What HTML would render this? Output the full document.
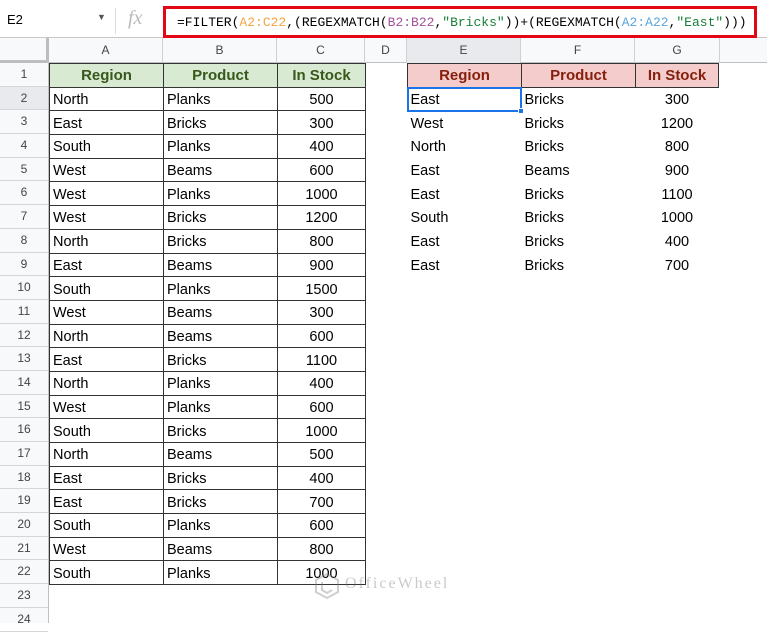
<!DOCTYPE html>
<html><head><meta charset="utf-8"><style>
*{box-sizing:border-box;margin:0;padding:0}
body{width:767px;height:623px;overflow:hidden;background:#fff;font-family:"Liberation Sans",Arial,sans-serif;font-size:14px;color:#000;position:relative}
.abs{position:absolute}
#top{left:0;top:0;width:767px;height:38px;background:#fff;border-bottom:1px solid #c7c7c7}
#namebox{left:0;top:8px;width:116px;height:26px;font-size:13px;padding:4px 7px;border-right:1px solid #dadce0}
#fx{left:128px;top:7px;font-family:"Liberation Serif",serif;font-style:italic;font-size:20px;color:#bbb}
#formula{left:163px;top:6px;width:594px;height:32px;border:3px solid #e30613;font-family:"Liberation Mono",monospace;font-size:13px;padding:6px 0 0 11px;white-space:nowrap;overflow:hidden}
#colhdr{left:0;top:38px;width:767px;height:25px;background:#f8f9fa;border-bottom:1px solid #c0c0c0}
.ch{position:absolute;top:0;height:25px;line-height:25px;text-align:center;font-size:12px;color:#444;border-right:1px solid #d0d0d0}
#rowhdr{left:0;top:63px;width:49px;height:560px;background:#f8f9fa;border-right:1px solid #c0c0c0}
.rh{height:23.7px;line-height:23.7px;text-align:center;font-size:12px;color:#444;border-bottom:1px solid #d6d6d6}
table{border-collapse:collapse;position:absolute;table-layout:fixed}
td{height:23.7px;padding:2px 3px 0;white-space:nowrap;overflow:hidden;font-size:14.5px;line-height:20px}
#L td{border:1px solid #333}
#L tr:first-child td{background:#d9ead3;color:#38571a;font-weight:bold;text-align:center;font-size:15px}
.n{text-align:center}
#R tr:first-child td{background:#f4cccc;color:#85200c;font-weight:bold;text-align:center;font-size:15px;border:1px solid #333}
#R td{border:none}
</style></head><body>
<div id="top" class="abs"></div>
<div id="namebox" class="abs">E2<span style="position:absolute;left:97px;top:4px;font-size:9px;color:#555">▼</span></div>
<div id="fx" class="abs">fx</div>
<div id="formula" class="abs">=FILTER(<span style="color:#f4a340">A2:C22</span>,(REGEXMATCH(<span style="color:#a5529c">B2:B22</span>,<span style="color:#188038">"Bricks"</span>))+(REGEXMATCH(<span style="color:#5aa5dc">A2:A22</span>,<span style="color:#188038">"East"</span>)))</div>
<div id="colhdr" class="abs">
<div class="ch" style="left:0;width:49px;border-right:3px solid #bdbdbd;border-bottom:3px solid #bdbdbd;height:25px"></div>
<div class="ch" style="left:49px;width:114px">A</div>
<div class="ch" style="left:163px;width:114px">B</div>
<div class="ch" style="left:277px;width:88px">C</div>
<div class="ch" style="left:365px;width:42px">D</div>
<div class="ch" style="left:407px;width:114px;background:#e8eaed">E</div>
<div class="ch" style="left:521px;width:114px">F</div>
<div class="ch" style="left:635px;width:85px">G</div>
</div>
<div id="rowhdr" class="abs">
<div class="rh">1</div><div class="rh" style="background:#e8eaed">2</div><div class="rh">3</div><div class="rh">4</div><div class="rh">5</div><div class="rh">6</div><div class="rh">7</div><div class="rh">8</div><div class="rh">9</div><div class="rh">10</div><div class="rh">11</div><div class="rh">12</div><div class="rh">13</div><div class="rh">14</div><div class="rh">15</div><div class="rh">16</div><div class="rh">17</div><div class="rh">18</div><div class="rh">19</div><div class="rh">20</div><div class="rh">21</div><div class="rh">22</div><div class="rh">23</div><div class="rh">24</div>
</div>
<table id="L" style="left:49px;top:63px;width:316px">
<colgroup><col style="width:114px"><col style="width:114px"><col style="width:88px"></colgroup>
<tr><td>Region</td><td>Product</td><td>In Stock</td></tr>
<tr><td>North</td><td>Planks</td><td class="n">500</td></tr>
<tr><td>East</td><td>Bricks</td><td class="n">300</td></tr>
<tr><td>South</td><td>Planks</td><td class="n">400</td></tr>
<tr><td>West</td><td>Beams</td><td class="n">600</td></tr>
<tr><td>West</td><td>Planks</td><td class="n">1000</td></tr>
<tr><td>West</td><td>Bricks</td><td class="n">1200</td></tr>
<tr><td>North</td><td>Bricks</td><td class="n">800</td></tr>
<tr><td>East</td><td>Beams</td><td class="n">900</td></tr>
<tr><td>South</td><td>Planks</td><td class="n">1500</td></tr>
<tr><td>West</td><td>Beams</td><td class="n">300</td></tr>
<tr><td>North</td><td>Beams</td><td class="n">600</td></tr>
<tr><td>East</td><td>Bricks</td><td class="n">1100</td></tr>
<tr><td>North</td><td>Planks</td><td class="n">400</td></tr>
<tr><td>West</td><td>Planks</td><td class="n">600</td></tr>
<tr><td>South</td><td>Bricks</td><td class="n">1000</td></tr>
<tr><td>North</td><td>Beams</td><td class="n">500</td></tr>
<tr><td>East</td><td>Bricks</td><td class="n">400</td></tr>
<tr><td>East</td><td>Bricks</td><td class="n">700</td></tr>
<tr><td>South</td><td>Planks</td><td class="n">600</td></tr>
<tr><td>West</td><td>Beams</td><td class="n">800</td></tr>
<tr><td>South</td><td>Planks</td><td class="n">1000</td></tr>
</table>
<table id="R" style="left:407px;top:63px;width:311px">
<colgroup><col style="width:114px"><col style="width:114px"><col style="width:83px"></colgroup>
<tr><td>Region</td><td>Product</td><td>In Stock</td></tr>
<tr><td>East</td><td>Bricks</td><td class="n">300</td></tr>
<tr><td>West</td><td>Bricks</td><td class="n">1200</td></tr>
<tr><td>North</td><td>Bricks</td><td class="n">800</td></tr>
<tr><td>East</td><td>Beams</td><td class="n">900</td></tr>
<tr><td>East</td><td>Bricks</td><td class="n">1100</td></tr>
<tr><td>South</td><td>Bricks</td><td class="n">1000</td></tr>
<tr><td>East</td><td>Bricks</td><td class="n">400</td></tr>
<tr><td>East</td><td>Bricks</td><td class="n">700</td></tr>
</table>
<div class="abs" style="left:407px;top:87px;width:115px;height:25px;border:2px solid #1a73e8"></div>
<div class="abs" style="left:518px;top:108px;width:6px;height:6px;background:#1a73e8;border:1px solid #fff"></div>
<div class="abs" style="left:313px;top:570px;width:148px;height:30px;opacity:0.35">
<svg class="abs" style="left:0;top:2px" width="28" height="28" viewBox="0 0 28 28" fill="none" stroke="#777" stroke-width="2"><path d="M14 2 L25 8 V20 L14 26 L3 20 V8 Z"/><path d="M9 10 V18 L14 21 L19 18"/></svg>
<span class="abs" style="left:32px;top:5px;font-family:'Liberation Serif',serif;font-size:16px;letter-spacing:2px;color:#666">OfficeWheel</span>
</div>
</body></html>
